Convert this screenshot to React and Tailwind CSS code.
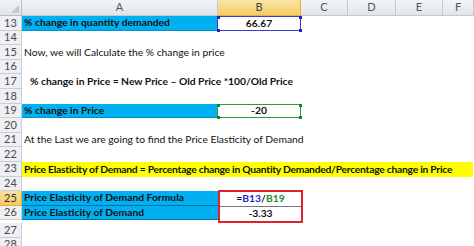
import React from 'react'

const font = { fontFamily: 'Lato, "Liberation Sans", sans-serif' }

const cols = ['A', 'B', 'C', 'D', 'E', 'F']
const widths = ['w-[196px]', 'w-[83px]', 'w-[47px]', 'w-[48px]', 'w-[47px]', 'flex-1']

const RowNum = ({ n, active }) => (
  <div
    className={`w-[22px] shrink-0 h-full flex items-center justify-center border-r border-b text-[11px] ${
      active
        ? 'bg-gradient-to-b from-[#f9e3a0] to-[#f4c95c] border-[#e2b13e] text-[#333]'
        : 'bg-[#eef0f3] border-[#c9ced6] text-[#4a4a4a]'
    }`}
  >
    {n}
  </div>
)

const Row = ({ n, active, children }) => (
  <div className="flex h-[14.6px]">
    <RowNum n={n} active={active} />
    <div className="flex-1 flex h-full items-stretch">{children}</div>
  </div>
)

const Handle = ({ pos, color }) => (
  <span className={`absolute w-[3px] h-[3px] ${pos} ${color}`} />
)

const App = () => {
  return (
    <div className="w-[474px] h-[246px] bg-white overflow-hidden text-[#111]" style={font}>
      {/* column headers */}
      <div className="flex h-[16px]">
        <div className="w-[22px] shrink-0 relative bg-gradient-to-b from-[#f3f4f6] to-[#e1e4e9] border-r border-b border-[#b8bec8]">
          <span className="absolute right-[2px] bottom-[2px] w-0 h-0 border-l-[8px] border-l-transparent border-b-[8px] border-b-[#c3c8cf]" />
        </div>
        {cols.map((c, i) => (
          <div
            key={c}
            className={`${widths[i]} shrink-0 flex items-center justify-center text-[11px] border-r border-b ${
              c === 'B'
                ? 'bg-gradient-to-b from-[#fae5a6] to-[#f4cc66] border-[#e2b13e] text-[#444]'
                : 'bg-gradient-to-b from-[#f3f4f6] to-[#e1e4e9] border-[#c4c9d1] text-[#555]'
            }`}
          >
            {c}
          </div>
        ))}
      </div>

      <Row n={13}>
        <div className="w-[196px] bg-[#00b0f0] font-bold text-[10.3px] pl-[2px] flex items-center border-b border-[#0090c8]">
          % change in quantity demanded
        </div>
        <div className="w-[84px] relative border border-[#3c3cd0] font-bold text-[10.3px] flex items-center justify-center -ml-px">
          66.67
          <Handle pos="-left-[1px] -top-[1px]" color="bg-[#2222c0]" />
          <Handle pos="-right-[2px] -top-[1px]" color="bg-[#2222c0]" />
          <Handle pos="-left-[1px] -bottom-[2px]" color="bg-[#2222c0]" />
          <Handle pos="-right-[2px] -bottom-[2px]" color="bg-[#2222c0]" />
        </div>
      </Row>
      <Row n={14} />
      <Row n={15}>
        <div className="pl-[2px] text-[10.3px] whitespace-nowrap flex items-center">
          Now, we will Calculate the % change in price
        </div>
      </Row>
      <Row n={16} />
      <Row n={17}>
        <div className="pl-[8px] text-[10.3px] font-bold whitespace-nowrap flex items-center">
          % change in Price = New Price – Old Price *100/Old Price
        </div>
      </Row>
      <Row n={18} />
      <Row n={19}>
        <div className="w-[196px] bg-[#00b0f0] font-bold text-[10.3px] pl-[2px] flex items-center border-b border-[#0090c8]">
          % change in Price
        </div>
        <div className="w-[84px] relative border border-[#2e9a3e] font-bold text-[10.3px] flex items-center justify-center -ml-px">
          -20
          <Handle pos="-left-[1px] -top-[1px]" color="bg-[#1e7d2e]" />
          <Handle pos="-right-[2px] -top-[1px]" color="bg-[#1e7d2e]" />
          <Handle pos="-left-[1px] -bottom-[2px]" color="bg-[#1e7d2e]" />
          <Handle pos="-right-[2px] -bottom-[2px]" color="bg-[#1e7d2e]" />
        </div>
      </Row>
      <Row n={20} />
      <Row n={21}>
        <div className="pl-[2px] text-[10.3px] whitespace-nowrap flex items-center">
          At the Last we are going to find the Price Elasticity of Demand
        </div>
      </Row>
      <Row n={22} />
      <Row n={23}>
        <div className="flex-1 mr-[1px] bg-[#ffff00] pl-[2px] text-[10.3px] tracking-[-0.25px] font-bold whitespace-nowrap flex items-center overflow-hidden">
          Price Elasticity of Demand = Percentage change in Quantity Demanded/Percentage change in Price
        </div>
      </Row>
      <Row n={24} />
      <div className="flex">
        <div className="flex flex-col">
          <div className="h-[14.6px] flex">
            <RowNum n={25} active />
          </div>
          <div className="h-[14.6px] flex">
            <RowNum n={26} />
          </div>
        </div>
        <div className="flex flex-col w-[196px]">
          <div className="h-[14.6px] bg-[#00b0f0] font-bold text-[10.3px] pl-[2px] flex items-center border-b border-[#0a6f9a]">
            Price Elasticity of Demand Formula
          </div>
          <div className="h-[14.6px] bg-[#00b0f0] font-bold text-[10.3px] pl-[2px] flex items-center border-b border-[#0a6f9a]">
            Price Elasticity of Demand
          </div>
        </div>
        <div className="w-[85px] -mt-[1px] border-2 border-[#e0232b] flex flex-col font-bold text-[10.3px]">
          <div className="h-[14.6px] flex items-center justify-center border-b border-[#777]">
            <span>
              =<span className="text-[#2424d8]">B13</span>/<span className="text-[#1e8a2e]">B19</span>
            </span>
          </div>
          <div className="h-[14.6px] flex items-center justify-center">-3.33</div>
        </div>
      </div>
      <Row n={27} />
      <Row n={28} />
    </div>
  )
}

export default App
